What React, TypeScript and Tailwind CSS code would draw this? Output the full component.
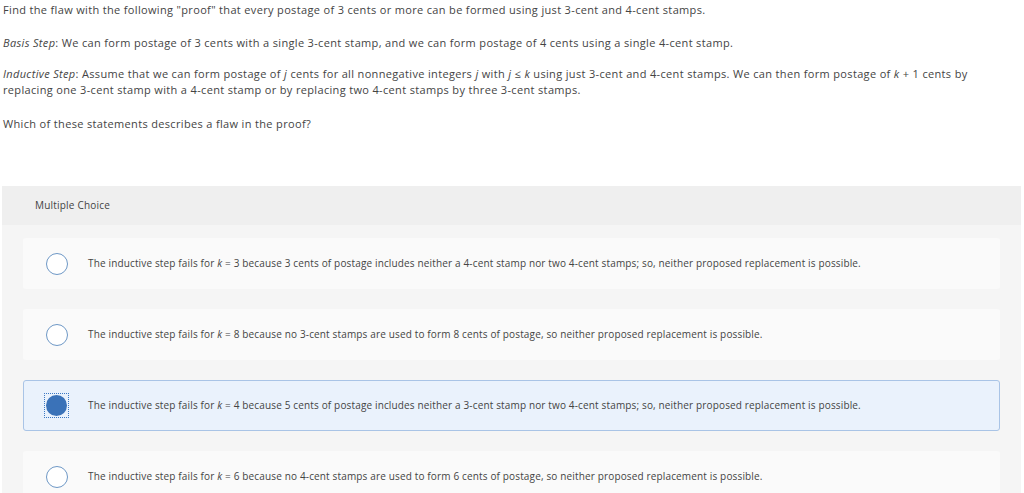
import React from "react";

const options = [
  { k: "3", rest: "because 3 cents of postage includes neither a 4-cent stamp nor two 4-cent stamps; so, neither proposed replacement is possible.", selected: false },
  { k: "8", rest: "because no 3-cent stamps are used to form 8 cents of postage, so neither proposed replacement is possible.", selected: false },
  { k: "4", rest: "because 5 cents of postage includes neither a 3-cent stamp nor two 4-cent stamps; so, neither proposed replacement is possible.", selected: true },
  { k: "6", rest: "because no 4-cent stamps are used to form 6 cents of postage, so neither proposed replacement is possible.", selected: false },
];

export default function App() {
  return (
    <div className="w-[1024px] h-[493px] overflow-hidden bg-white text-[#444] font-['Open_Sans','Liberation_Sans',sans-serif]">
      <div className="pl-[3px] pr-[44px] pt-[2px] text-[11px] leading-[16px] tracking-[0.34px]">
        <p>Find the flaw with the following "proof" that every postage of 3 cents or more can be formed using just 3-cent and 4-cent stamps.</p>
        <p className="mt-[17px]"><i>Basis Step</i>: We can form postage of 3 cents with a single 3-cent stamp, and we can form postage of 4 cents using a single 4-cent stamp.</p>
        <p className="mt-[15px]"><i>Inductive Step</i>: Assume that we can form postage of <i>j</i> cents for all nonnegative integers <i>j</i> with <i>j</i> ≤ <i>k</i> using just 3-cent and 4-cent stamps. We can then form postage of <i>k</i> + 1 cents by replacing one 3-cent stamp with a 4-cent stamp or by replacing two 4-cent stamps by three 3-cent stamps.</p>
        <p className="mt-[18px]">Which of these statements describes a flaw in the proof?</p>
      </div>
      <div className="mt-[54px] ml-[2px] w-[1019px] bg-[#f5f5f5]">
        <div className="h-[39px] bg-[#efefef] flex items-center pl-[33px] text-[10px] tracking-[0.2px] text-[#444]">Multiple Choice</div>
        <div className="pl-[21px] pr-[21px] pt-[13px] flex flex-col gap-[20px]">
          {options.map((o, i) => (
            <div
              key={i}
              className={
                o.selected
                  ? "h-[51px] flex items-center rounded-[3px] border border-[#a9c4e6] bg-[#eaf2fc]"
                  : "h-[51px] flex items-center rounded-[3px] border border-transparent bg-[#fafafa]"
              }
            >
              <div className="w-[64px] flex justify-center pl-[1px]">
                {o.selected ? (
                  <div className="p-[1px] outline outline-1 outline-dotted outline-[#3b78c4]">
                    <div className="w-[21px] h-[21px] rounded-full bg-[#3a72b8]" />
                  </div>
                ) : (
                  <div className="w-[22px] h-[22px] rounded-full border-[1.5px] border-[#6e98c6] bg-white" />
                )}
              </div>
              <div className="text-[10px] tracking-[0.15px] text-[#444]">
                The inductive step fails for <i>k</i> = {o.k} {o.rest}
              </div>
            </div>
          ))}
        </div>
      </div>
    </div>
  );
}
